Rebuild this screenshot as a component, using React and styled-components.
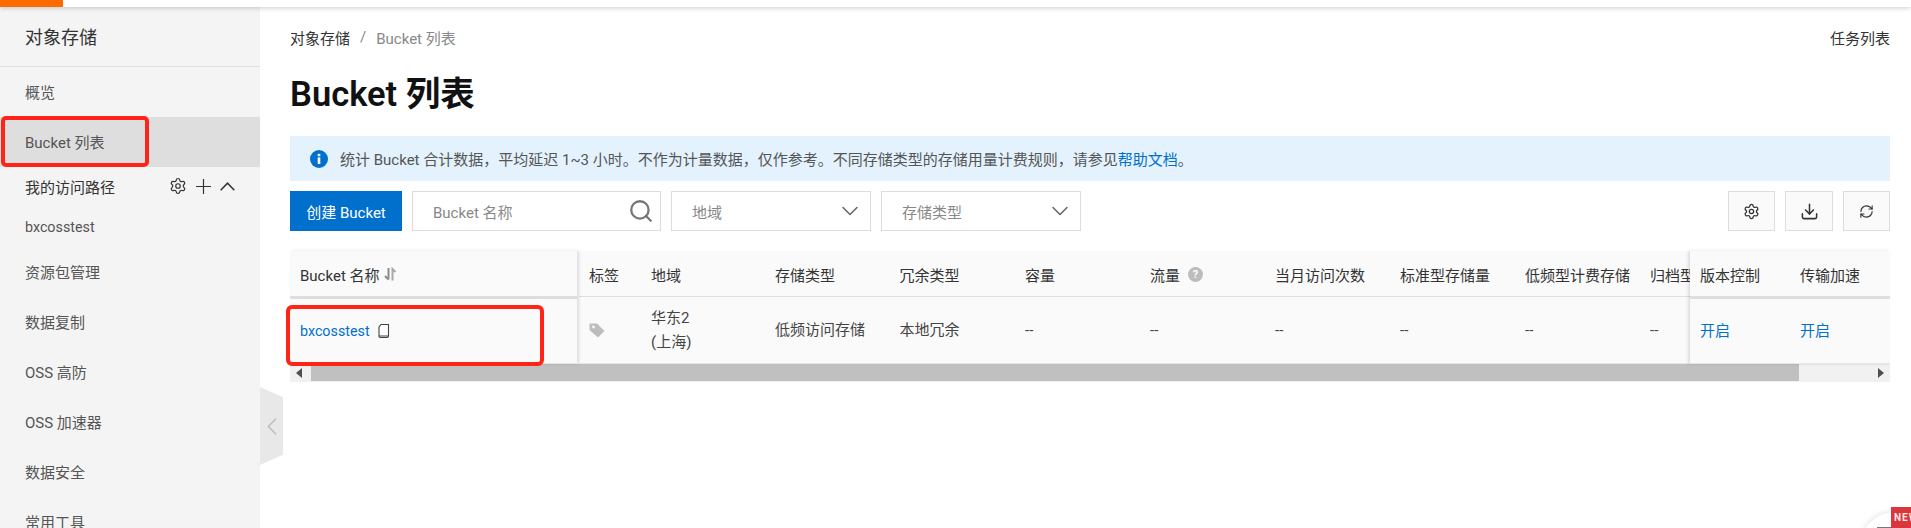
import React from 'react';
import styled, {createGlobalStyle} from 'styled-components';
import {Settings, ChevronDown, Search, Download, RefreshCw} from 'lucide-react';

const GlobalStyle = createGlobalStyle`
    html, body {
        margin: 0;
        padding: 0;
        height: 100%;
        overflow: hidden;
        background: #FFF;
        font-family: Roboto, "Noto Sans CJK SC", sans-serif;
        font-size: 15px;
        color: #333;
    }
`;

const navItems = ['资源包管理', '数据复制', 'OSS 高防', 'OSS 加速器', '数据安全', '常用工具'];

const midCols = [
    {title: '标签', width: 62, tag: true},
    {title: '地域', width: 124, region: true},
    {title: '存储类型', width: 124.5, value: '低频访问存储'},
    {title: '冗余类型', width: 125.5, value: '本地冗余'},
    {title: '容量', width: 125, value: '--'},
    {title: '流量', width: 125, value: '--', help: true},
    {title: '当月访问次数', width: 125, value: '--'},
    {title: '标准型存储量', width: 125, value: '--'},
    {title: '低频型计费存储', width: 125, value: '--'},
    {title: '归档型存储量', width: 125, value: '--'},
];

const TagIcon = () => (
    <svg width="16" height="16" viewBox="0 0 16 16">
        <path d="M.5 1.5h7.5l7.5 7.5-6.5 6.5L.5 8z" fill="#BDBDBD"/>
        <circle cx="4.5" cy="5" r="1.4" fill="#FAFAFA"/>
    </svg>
);

const CopyIcon = () => (
    <svg width="14" height="16" viewBox="0 0 14 16" fill="none" stroke="#444" strokeWidth="1.1">
        <path d="M5 1.5h7.5v11.5h-9.5V4z" fill="#FFF"/>
        <path d="M3 13c0 1 .6 1.5 1.5 1.5h6.5c1 0 1.5-.6 1.5-1.5"/>
    </svg>
);

const SortIcon = () => (
    <svg width="13" height="14" viewBox="0 0 13 14" fill="none" stroke="#8C8C8C" strokeWidth="2">
        <path d="M4.5 1v11.5M1 9l3.5 3.5"/>
        <path d="M8.5 13.5V2l3 3" stroke="#A8A8A8"/>
    </svg>
);

const InfoIcon = () => (
    <svg width="18" height="18" viewBox="0 0 18 18">
        <circle cx="9" cy="9" r="9" fill="#0070CC"/>
        <rect x="7.7" y="7.4" width="2.6" height="6.6" fill="#FFF"/>
        <rect x="7.7" y="3.8" width="2.6" height="2.4" fill="#FFF"/>
    </svg>
);

const PlusGlyph = () => (
    <svg width="15" height="15" viewBox="0 0 15 15" stroke="#333" strokeWidth="1.2">
        <path d="M0 7.5h15M7.5 0v15"/>
    </svg>
);

const UpGlyph = () => (
    <svg width="15" height="9" viewBox="0 0 15 9" fill="none" stroke="#333" strokeWidth="1.5">
        <path d="M.7 8.3 7.5 1.2l6.8 7.1"/>
    </svg>
);

const BackGlyph = () => (
    <svg width="10" height="17" viewBox="0 0 10 17" fill="none" stroke="#BDBDBD" strokeWidth="1.6">
        <path d="M9 .8 1.4 8.5 9 16.2"/>
    </svg>
);

const App = () => (
    <Page>
        <GlobalStyle/>
        <TopBar><Brand/></TopBar>
        <Body>
            <Sidebar>
                <SideTitle>对象存储</SideTitle>
                <NavItem>概览</NavItem>
                <NavItem active>
                    Bucket 列表
                    <NavMark/>
                </NavItem>
                <PathHead>
                    <span>我的访问路径</span>
                    <PathTools>
                        <Settings size={18} strokeWidth={1.6}/>
                        <PlusGlyph/>
                        <UpGlyph/>
                    </PathTools>
                </PathHead>
                <PathLink>bxcosstest</PathLink>
                {navItems.map((item) => <NavItem key={item}>{item}</NavItem>)}
                <Collapse><BackGlyph/></Collapse>
            </Sidebar>
            <Main>
                <CrumbRow>
                    <Crumbs>
                        <span>对象存储</span>
                        <CrumbSep>/</CrumbSep>
                        <CrumbCurrent>Bucket 列表</CrumbCurrent>
                    </Crumbs>
                    <span>任务列表</span>
                </CrumbRow>
                <Title>Bucket 列表</Title>
                <Notice>
                    <InfoIcon/>
                    <span>统计 Bucket 合计数据，平均延迟 1~3 小时。不作为计量数据，仅作参考。不同存储类型的存储用量计费规则，请参见<NoticeLink>帮助文档</NoticeLink>。</span>
                </Notice>
                <Toolbar>
                    <PrimaryButton>创建 Bucket</PrimaryButton>
                    <SearchBox>
                        <span>Bucket 名称</span>
                        <Search size={26} strokeWidth={2.1} color="#777"/>
                    </SearchBox>
                    <SelectBox>地域<ChevronDown size={28} strokeWidth={1.3} color="#666"/></SelectBox>
                    <SelectBox>存储类型<ChevronDown size={28} strokeWidth={1.3} color="#666"/></SelectBox>
                    <ToolActions>
                        <IconButton><Settings size={17} strokeWidth={1.8}/></IconButton>
                        <IconButton><Download size={19} strokeWidth={1.9}/></IconButton>
                        <IconButton><RefreshCw size={15} strokeWidth={1.8}/></IconButton>
                    </ToolActions>
                </Toolbar>
                <Table>
                    <Pane width={287} side="left">
                        <HeadCell width={287} thick>Bucket 名称 <SortIcon/></HeadCell>
                        <BodyCell width={287} thick>
                            <BucketLink>bxcosstest</BucketLink>
                            <CopyIcon/>
                            <RowMark/>
                        </BodyCell>
                    </Pane>
                    <MidPane>
                        <Row>
                            {midCols.map((col) => (
                                <HeadCell key={col.title} width={col.width}>
                                    {col.title}
                                    {col.help && <Help>?</Help>}
                                </HeadCell>
                            ))}
                        </Row>
                        <Row>
                            {midCols.map((col) => (
                                <BodyCell key={col.title} width={col.width}>
                                    {col.tag && <TagIcon/>}
                                    {col.region && <span>华东2<br/>(上海)</span>}
                                    {col.value}
                                </BodyCell>
                            ))}
                        </Row>
                    </MidPane>
                    <Pane width={200} side="right">
                        <Row>
                            <HeadCell width={100} thick>版本控制</HeadCell>
                            <HeadCell width={100} thick>传输加速</HeadCell>
                        </Row>
                        <Row>
                            <BodyCell width={100} thick><Link>开启</Link></BodyCell>
                            <BodyCell width={100} thick><Link>开启</Link></BodyCell>
                        </Row>
                    </Pane>
                </Table>
                <ScrollBar>
                    <ArrowLeft/>
                    <Thumb/>
                    <ArrowRight/>
                </ScrollBar>
            </Main>
        </Body>
        <HelpWidget>
            <WidgetGlyph/>
            <NewBadge>NEW</NewBadge>
        </HelpWidget>
    </Page>
);

const Page = styled.div`
    height: 528px;
    display: flex;
    flex-direction: column;
    overflow: hidden;
    position: relative;
`;

const TopBar = styled.div`
    height: 7px;
    flex: none;
    background: #FFF;
    box-shadow: 0 1px 5px rgba(0, 0, 0, .2);
    position: relative;
    z-index: 2;
`;

const Brand = styled.div`
    width: 63px;
    height: 7px;
    background: #FF6A00;
`;

const Body = styled.div`
    flex: 1;
    display: flex;
    min-height: 0;
`;

const Sidebar = styled.div`
    width: 260px;
    flex: none;
    background: #F4F4F4;
    position: relative;
    color: #555;
`;

const SideTitle = styled.div`
    height: 59px;
    line-height: 62px;
    padding-left: 25px;
    font-size: 18px;
    color: #333;
    border-bottom: 1px solid #E0E0E0;
`;

const NavItem = styled.div`
    height: 50px;
    line-height: 52px;
    padding-left: 25px;
    position: relative;
    background: ${props => props.active ? '#DEDEDE' : 'transparent'};
`;

const NavMark = styled.div`
    position: absolute;
    left: 1px;
    top: -1px;
    width: 148px;
    height: 51px;
    box-sizing: border-box;
    border: 4px solid #FF2415;
    border-radius: 5px;
`;

const PathHead = styled.div`
    height: 40px;
    box-sizing: border-box;
    padding: 0 25px 2px;
    display: flex;
    align-items: center;
    justify-content: space-between;
    color: #333;
`;

const PathTools = styled.div`
    display: flex;
    align-items: center;
    gap: 9px;
`;

const PathLink = styled.div`
    height: 40px;
    line-height: 40px;
    padding-left: 25px;
    font-size: 14.3px;
`;

const Collapse = styled.div`
    position: absolute;
    left: 260px;
    top: 380px;
    width: 23px;
    height: 78px;
    background: #E8E8E8;
    clip-path: polygon(0 0, 100% 13%, 100% 87%, 0 100%);
    display: flex;
    align-items: center;
    justify-content: center;
`;

const Main = styled.div`
    flex: 1;
    min-width: 0;
    padding: 0 21px 0 30px;
`;

const CrumbRow = styled.div`
    height: 60px;
    display: flex;
    align-items: center;
    justify-content: space-between;
    color: #333;
`;

const Crumbs = styled.div`
    display: flex;
    align-items: center;
`;

const CrumbSep = styled.span`
    margin: 0 10px;
    color: #888;
`;

const CrumbCurrent = styled.span`
    color: #888;
`;

const Title = styled.h1`
    margin: 0;
    height: 69px;
    line-height: 54px;
    font-size: 34.5px;
    font-weight: 600;
    color: #111;
`;

const Notice = styled.div`
    height: 45px;
    padding-left: 20px;
    display: flex;
    align-items: center;
    gap: 12px;
    background: #E3F2FD;
    color: #555;
`;

const NoticeLink = styled.span`
    color: #0070CC;
`;

const Toolbar = styled.div`
    margin-top: 10px;
    height: 40px;
    display: flex;
    gap: 10px;
`;

const PrimaryButton = styled.div`
    width: 112px;
    display: flex;
    align-items: center;
    justify-content: center;
    background: #0070CC;
    color: #FFF;
`;

const SearchBox = styled.div`
    width: 249px;
    box-sizing: border-box;
    padding: 0 6px 0 20px;
    display: flex;
    align-items: center;
    justify-content: space-between;
    border: 1px solid #DDD;
    color: #888;
`;

const SelectBox = styled.div`
    width: 200px;
    box-sizing: border-box;
    padding: 0 6px 0 20px;
    display: flex;
    align-items: center;
    justify-content: space-between;
    border: 1px solid #DDD;
    color: #888;
`;

const ToolActions = styled.div`
    margin-left: auto;
    display: flex;
    gap: 10px;
`;

const IconButton = styled.div`
    width: 47.33px;
    box-sizing: border-box;
    display: flex;
    align-items: center;
    justify-content: center;
    border: 1px solid #DDD;
    background: #FAFAFA;
    color: #333;
`;

const Table = styled.div`
    margin-top: 20px;
    display: flex;
    background: #FAFAFA;
`;

const Pane = styled.div`
    width: ${props => props.width}px;
    flex: none;
    position: relative;
    z-index: 1;
    background: #FAFAFA;
    box-shadow: ${props => props.side === 'left' ? '2px 0 3px rgba(0, 0, 0, .12)' : '-2px 0 3px rgba(0, 0, 0, .12)'};
`;

const MidPane = styled.div`
    flex: 1;
    min-width: 0;
    padding-left: 2px;
    overflow: hidden;
`;

const Row = styled.div`
    display: flex;
`;

const HeadCell = styled.div`
    width: ${props => props.width}px;
    height: ${props => props.thick ? '48px' : '46px'};
    flex: none;
    box-sizing: border-box;
    padding: 1px 0 0 10px;
    display: flex;
    align-items: center;
    gap: 4px;
    white-space: nowrap;
    color: #333;
    border-bottom: ${props => props.thick ? '3px solid #DEDEDE' : '1px solid #DEDEDE'};
`;

const BodyCell = styled.div`
    width: ${props => props.width}px;
    height: ${props => props.thick ? '65px' : '67px'};
    flex: none;
    box-sizing: border-box;
    padding-left: 10px;
    display: flex;
    align-items: center;
    gap: 6px;
    position: relative;
    line-height: 24px;
    white-space: nowrap;
    color: #444;
    border-bottom: 1px solid #E6E6E6;
`;

const RowMark = styled.div`
    position: absolute;
    left: -4px;
    top: 6px;
    width: 258px;
    height: 61px;
    box-sizing: border-box;
    border: 4px solid #FF2415;
    border-radius: 6px;
    z-index: 3;
`;

const Link = styled.span`
    color: #0070CC;
`;

const BucketLink = styled(Link)`
    font-size: 14.3px;
`;

const Help = styled.span`
    width: 15px;
    height: 15px;
    margin-left: 4px;
    border-radius: 50%;
    background: #BDBDBD;
    color: #FFF;
    font-size: 11px;
    font-weight: 700;
    line-height: 15px;
    text-align: center;
`;

const ScrollBar = styled.div`
    height: 18px;
    display: flex;
    align-items: center;
    background: #F1F1F1;
`;

const ArrowLeft = styled.div`
    width: 0;
    height: 0;
    margin: 0 9px 0 6px;
    border: 5px solid transparent;
    border-left: 0;
    border-right: 6px solid #505050;
`;

const Thumb = styled.div`
    width: 1488px;
    height: 17px;
    margin-bottom: 1px;
    background: #C0C0C0;
`;

const ArrowRight = styled.div`
    width: 0;
    height: 0;
    margin-left: auto;
    margin-right: 6px;
    border: 5px solid transparent;
    border-right: 0;
    border-left: 6px solid #505050;
`;

const HelpWidget = styled.div`
    position: absolute;
    left: 1860px;
    top: 512px;
    width: 70px;
    height: 70px;
    border-radius: 50%;
    background: #FFF;
    box-shadow: 0 0 6px rgba(0, 0, 0, .15);
`;

const WidgetGlyph = styled.div`
    position: absolute;
    left: 17px;
    top: 15px;
    width: 14px;
    height: 3px;
    background: #777;
`;

const NewBadge = styled.div`
    position: absolute;
    left: 31px;
    top: -5px;
    height: 21px;
    padding: 0 3px;
    background: #D9363E;
    color: #FFE9E9;
    font-size: 10px;
    font-weight: 700;
    line-height: 21px;
    letter-spacing: 1px;
`;

export default App;
